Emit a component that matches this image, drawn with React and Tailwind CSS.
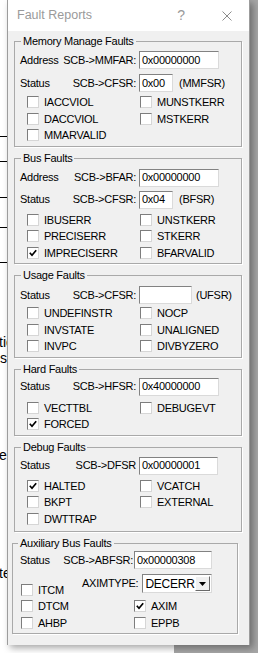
import React from 'react';

const Check = ({ checked }) => (
  <span className="w-[12px] h-[12px] shrink-0 bg-white border border-t-[#7d7d7d] border-l-[#7d7d7d] border-r-[#d6d6d6] border-b-[#d6d6d6] flex items-center justify-center">
    {checked && (
      <svg width="8" height="8" viewBox="0 0 8 8">
        <path d="M0.8 3.8 L3 6.2 L7.2 1.2" fill="none" stroke="#000" strokeWidth="1.7" />
      </svg>
    )}
  </span>
);

const Box = ({ label, checked }) => (
  <div className="flex items-center h-[16.5px]">
    <Check checked={checked} />
    <span className="ml-[5px] whitespace-nowrap">{label}</span>
  </div>
);

const Field = ({ value, w, cls = '' }) => (
  <div
    className={`h-[18px] bg-white border border-t-[#828282] border-l-[#828282] border-r-[#dadada] border-b-[#dadada] flex items-center pl-[2px] shrink-0 ${w} ${cls}`}
  >
    {value}
  </div>
);

const RegRow = ({ left, reg, value, w, suffix, cls }) => (
  <div className={`flex items-center h-[18px] pl-[5px] ${cls}`}>
    <div className="w-[116px] flex justify-between whitespace-nowrap">
      <span>{left}</span>
      <span>{reg}</span>
    </div>
    <Field value={value} w={w} cls="ml-[3px]" />
    {suffix && <span className={`whitespace-nowrap ${suffix.cls}`}>{suffix.text}</span>}
  </div>
);

const Group = ({ title, cls, children }) => (
  <fieldset className={`border border-[#a9a9a9] shadow-[1px_1px_0_#fff] ${cls}`}>
    <legend className="ml-[6px] px-[2px] leading-[13px]">{title}</legend>
    {children}
  </fieldset>
);

const Grid = ({ items, cls }) => (
  <div className={`grid grid-cols-[113px_1fr] pl-[12px] ${cls}`}>
    {items.map(([label, checked], i) => (
      <div key={i}>{label && <Box label={label} checked={checked} />}</div>
    ))}
  </div>
);

export default function App() {
  return (
    <div className="w-[258px] h-[653px] overflow-hidden flex flex-col bg-[#a6a6a6] text-[11px] tracking-[-0.25px] text-black font-['Liberation_Sans',Arial,sans-serif]">
      <div className="h-[645px] flex">
        {/* app behind the dialog */}
        <div className="w-[7px] bg-white flex flex-col overflow-hidden text-[14px] leading-[16px] tracking-normal">
          <div className="h-[136px] shrink-0" />
          <div className="h-px bg-black shrink-0" />
          <div className="h-[24px] shrink-0" />
          <div className="h-px bg-black shrink-0" />
          <div className="h-[35px] shrink-0" />
          <div className="h-px bg-black shrink-0" />
          <div className="h-[29px] shrink-0" />
          <div className="h-px bg-black shrink-0" />
          <div className="h-[34px] shrink-0" />
          <div className="h-px bg-black shrink-0" />
          <div className="h-[71px] shrink-0" />
          <div className="whitespace-nowrap -ml-[1px]">tic</div>
          <div className="whitespace-nowrap">s</div>
          <div className="h-[81px] shrink-0" />
          <div className="whitespace-nowrap -ml-[1px]">e</div>
          <div className="h-[102px] shrink-0" />
          <div className="whitespace-nowrap -ml-[1px]">te</div>
        </div>

        {/* dialog */}
        <div className="w-[243px] relative z-10 flex flex-col bg-[#f0f0f0] border-x border-[#9c9c9c] shadow-[3px_3px_7px_rgba(0,0,0,0.35)]">
          <div className="h-[31px] bg-white flex items-center pl-[9px] pr-[17px] text-[#9a9a9a] tracking-normal">
            <span className="text-[12.5px]">Fault Reports</span>
            <span className="ml-auto text-[14px] mr-[37px]">?</span>
            <svg width="10" height="10" viewBox="0 0 10 10">
              <path d="M0.5 0.5 L9.5 9.5 M9.5 0.5 L0.5 9.5" stroke="#8c8c8c" strokeWidth="1" />
            </svg>
          </div>

          <div className="flex-1 pt-[4px] flex flex-col">
            <Group title="Memory Manage Faults" cls="ml-[6px] mr-[7px] pb-[2px]">
              <RegRow left="Address" reg="SCB->MMFAR:" value="0x00000000" w="w-[80px]" cls="mt-[3px]" />
              <RegRow
                left="Status"
                reg="SCB->CFSR:"
                value="0x00"
                w="w-[34px]"
                cls="mt-[5px]"
                suffix={{ text: '(MMFSR)', cls: 'ml-[6px]' }}
              />
              <Grid
                cls="mt-[2px]"
                items={[
                  ['IACCVIOL'],
                  ['MUNSTKERR'],
                  ['DACCVIOL'],
                  ['MSTKERR'],
                  ['MMARVALID'],
                ]}
              />
            </Group>

            <Group title="Bus Faults" cls="ml-[6px] mr-[7px] mt-[5px] pb-[2px]">
              <RegRow left="Address" reg="SCB->BFAR:" value="0x00000000" w="w-[80px]" cls="mt-[4px]" />
              <RegRow
                left="Status"
                reg="SCB->CFSR:"
                value="0x04"
                w="w-[34px]"
                cls="mt-[4px]"
                suffix={{ text: '(BFSR)', cls: 'ml-[6px]' }}
              />
              <Grid
                cls="mt-[3px]"
                items={[
                  ['IBUSERR'],
                  ['UNSTKERR'],
                  ['PRECISERR'],
                  ['STKERR'],
                  ['IMPRECISERR', true],
                  ['BFARVALID'],
                ]}
              />
            </Group>

            <Group title="Usage Faults" cls="ml-[6px] mr-[7px] mt-[5px] pb-[2px]">
              <RegRow
                left="Status"
                reg="SCB->CFSR:"
                value=""
                w="w-[53px]"
                cls="mt-[4px]"
                suffix={{ text: '(UFSR)', cls: 'ml-[4px]' }}
              />
              <Grid
                cls="mt-[1px]"
                items={[
                  ['UNDEFINSTR'],
                  ['NOCP'],
                  ['INVSTATE'],
                  ['UNALIGNED'],
                  ['INVPC'],
                  ['DIVBYZERO'],
                ]}
              />
            </Group>

            <Group title="Hard Faults" cls="ml-[6px] mr-[7px] mt-[5px] pb-[2px]">
              <RegRow left="Status" reg="SCB->HFSR:" value="0x40000000" w="w-[80px]" cls="mt-[2px]" />
              <Grid cls="mt-[4px]" items={[['VECTTBL'], ['DEBUGEVT'], ['FORCED', true]]} />
            </Group>

            <Group title="Debug Faults" cls="ml-[6px] mr-[7px] mt-[5px] pb-[4px]">
              <RegRow left="Status" reg="SCB->DFSR" value="0x00000001" w="w-[79px]" cls="mt-[3px]" />
              <Grid
                cls="mt-[3px]"
                items={[['HALTED', true], ['VCATCH'], ['BKPT'], ['EXTERNAL'], ['DWTTRAP']]}
              />
            </Group>

            <fieldset className="ml-[4px] mr-[11px] mt-[5px] pb-[2px] border border-[#a9a9a9] shadow-[1px_1px_0_#fff]">
              <legend className="ml-[5px] px-[2px] leading-[13px]">Auxiliary Bus Faults</legend>
              <div className="flex items-center h-[18px] pl-[7px] mt-[1px]">
                <div className="w-[113px] flex justify-between whitespace-nowrap">
                  <span>Status</span>
                  <span>SCB-&gt;ABFSR:</span>
                </div>
                <Field value="0x00000308" w="w-[78px]" cls="ml-[1px]" />
              </div>
              <div className="flex h-[26px] pl-[8px] mt-[3px]">
                <div className="w-[61px] flex items-end">
                  <Box label="ITCM" />
                </div>
                <div className="flex items-center h-[19px] mt-[2px]">
                  <span>AXIMTYPE:</span>
                  <div className="ml-[4px] w-[70px] h-[19px] bg-white border border-t-[#828282] border-l-[#828282] border-r-[#dadada] border-b-[#dadada] flex items-center pl-[2px] pr-px">
                    <span className="text-[12px]">DECERR</span>
                    <div className="ml-auto w-[17px] h-[15px] bg-[#f0f0f0] border border-t-[#fff] border-l-[#fff] border-r-[#696969] border-b-[#696969] flex items-center justify-center">
                      <svg width="7" height="4" viewBox="0 0 7 4">
                        <path d="M0 0 H7 L3.5 4 Z" fill="#000" />
                      </svg>
                    </div>
                  </div>
                </div>
              </div>
              <div className="grid grid-cols-[113px_1fr] pl-[8px]">
                <Box label="DTCM" />
                <Box label="AXIM" checked />
                <Box label="AHBP" />
                <Box label="EPPB" />
              </div>
            </fieldset>
          </div>
        </div>

        <div className="flex-1" />
      </div>
      <div className="flex-1 flex">
        <div className="w-[174px] bg-white" />
      </div>
    </div>
  );
}
